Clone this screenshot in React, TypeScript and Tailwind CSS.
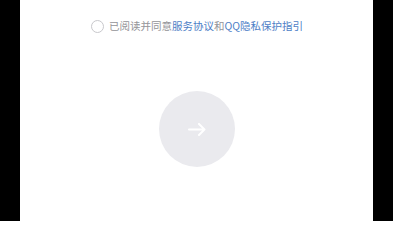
import React, { useState } from 'react';

export default function App() {
  const [agreed, setAgreed] = useState(false);

  return (
    <div className="w-[393px] h-[221px] bg-black flex justify-center overflow-hidden">
      <div className="w-[353px] h-full bg-white flex flex-col items-center">
        {/* Agreement row */}
        <div className="mt-[19px] ml-[1px] flex items-center gap-[5px] h-[14px]">
          <button
            onClick={() => setAgreed(!agreed)}
            className="w-[13px] h-[13px] rounded-full border border-[#c8c8cc] bg-white"
          />
          <p
            className="text-[10.5px] leading-[14px] text-[#949498] whitespace-nowrap"
            style={{ fontFamily: '"Noto Sans CJK SC", "Liberation Sans", sans-serif' }}
          >
            已阅读并同意<span className="text-[#4d7ec6]">服务协议</span>和
            <span className="text-[#4d7ec6]">QQ隐私保护指引</span>
          </p>
        </div>

        {/* Next button */}
        <button className="mt-[58px] w-[76px] h-[76px] rounded-full bg-[#eaeaee] flex items-center justify-center">
          <svg width="18" height="13" viewBox="0 0 18 13" fill="none">
            <path
              d="M1 6.5H16.5M11 1L16.5 6.5L11 12"
              stroke="white"
              strokeWidth="2"
              strokeLinecap="round"
              strokeLinejoin="round"
            />
          </svg>
        </button>
      </div>
    </div>
  );
}
